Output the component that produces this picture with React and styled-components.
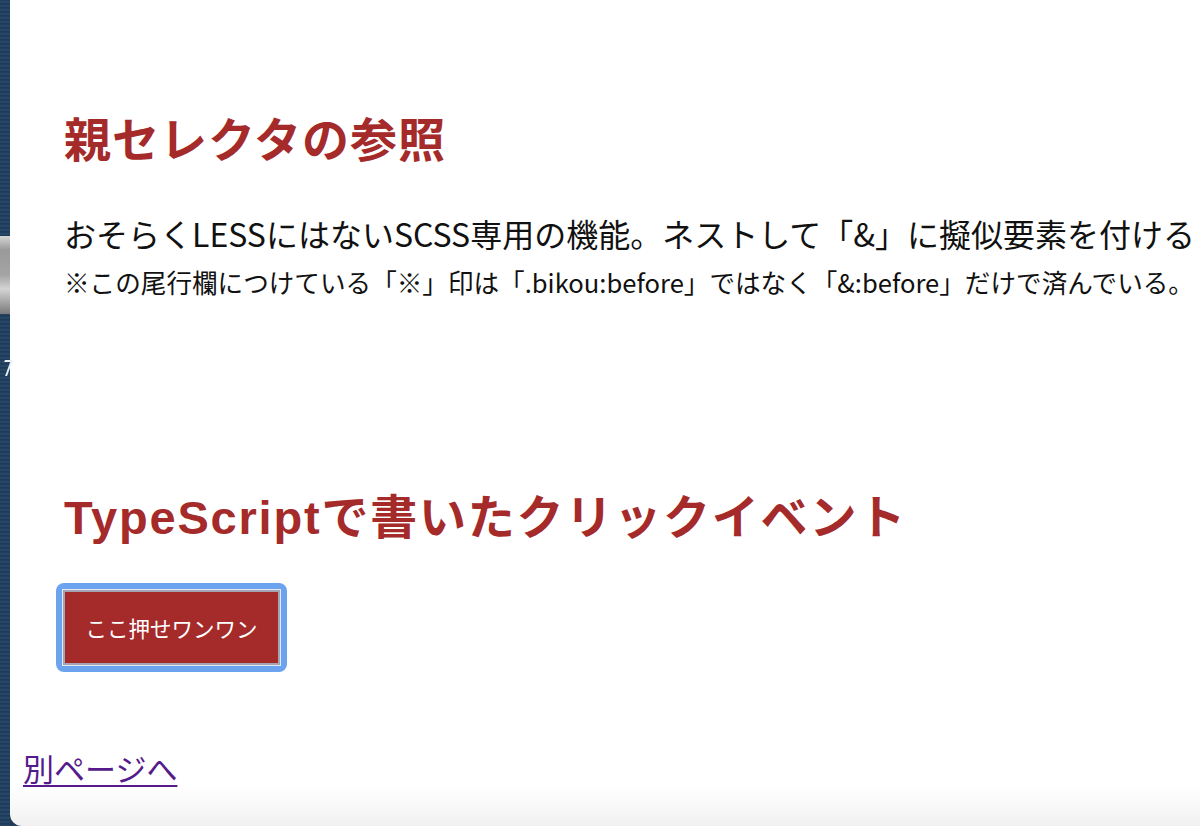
import styled, { createGlobalStyle } from "styled-components";

const GlobalStyle = createGlobalStyle`
  html, body {
    margin: 0;
    padding: 0;
    height: 826px;
    overflow: hidden;
    background: #1f3b58;
  }
  body {
    font-family: "Noto Sans CJK JP", "Noto Sans", sans-serif;
    color: #111;
  }
`;

const App = () => {
  return (
    <>
      <GlobalStyle />
      <Screen>
        <DesktopStrip>
          <Thumbnail />
          <DeskMark />
        </DesktopStrip>

        <BrowserWindow>
          <Content>
            <Section>
              <Heading>親セレクタの参照</Heading>
              <Lead>
                おそらくLESSにはないSCSS専用の機能。ネストして「&」に擬似要素を付ける
              </Lead>
              <Note>
                ※この尾行欄につけている「※」印は「.bikou:before」ではなく「&:before」だけで済んでいる。
              </Note>
            </Section>

            <Section $top={192}>
              <Heading $spacing={1.8}>TypeScriptで書いたクリックイベント</Heading>
              <FocusRing>
                <ClickButton type="button">ここ押せワンワン</ClickButton>
              </FocusRing>
            </Section>
          </Content>

          <PageLink href="#">別ページへ</PageLink>
        </BrowserWindow>
      </Screen>
    </>
  );
};

export default App;

const Screen = styled.div`
  display: flex;
  width: 1200px;
  height: 826px;
  overflow: hidden;
`;

const DesktopStrip = styled.div`
  flex: 0 0 9px;
  display: flex;
  flex-direction: column;
  background: repeating-linear-gradient(
    180deg,
    #1d3a57 0px,
    #2a4c6e 2px,
    #1a3450 4px
  );
`;

const Thumbnail = styled.div`
  margin-top: 236px;
  height: 78px;
  background: linear-gradient(
    180deg,
    #d6d6d6 0%,
    #9a9a9a 18%,
    #a4a4a4 50%,
    #d4d4d4 68%,
    #7a7a7a 100%
  );
`;

const DeskMark = styled.div`
  margin-top: 46px;
  margin-left: 2px;
  width: 6px;
  height: 14px;
  border-top: 2px solid #e8eef4;
  border-right: 2px solid #e8eef4;
  transform: skewX(-20deg);
`;

const BrowserWindow = styled.div`
  flex: 1;
  display: flex;
  flex-direction: column;
  padding-left: 13px;
  border-bottom-left-radius: 12px;
  background: linear-gradient(
    180deg,
    #ffffff 0px,
    #ffffff 785px,
    #f1f1f1 826px
  );
`;

const Content = styled.main`
  padding: 113px 0 0 41px;
`;

const Section = styled.section`
  margin-top: ${({ $top }) => ($top ? `${$top}px` : "0")};
`;

const Heading = styled.h1`
  margin: 0;
  font-family: "Liberation Sans", "Noto Sans CJK JP", sans-serif;
  font-size: 47px;
  line-height: 56px;
  font-weight: 700;
  letter-spacing: ${({ $spacing }) => $spacing ?? 1}px;
  color: #a52a2a;
  white-space: nowrap;
`;

const Lead = styled.p`
  margin: 43px 0 0;
  font-size: 32px;
  line-height: 42px;
  white-space: nowrap;
`;

const Note = styled.p`
  margin: 12px 0 0;
  font-size: 25.6px;
  line-height: 32px;
  white-space: nowrap;
`;

const FocusRing = styled.span`
  display: inline-flex;
  margin: 37px 0 0 -8px;
  padding: 7px;
  border-radius: 8px;
  background: #6ba3ee;
`;

const ClickButton = styled.button`
  width: 217px;
  height: 75px;
  padding: 0;
  border: 2px solid #a4a4b4;
  box-shadow: 0 0 0 1px #e3e9f3;
  background: #a52a2a;
  color: #fff;
  font-family: "Noto Sans CJK JP", sans-serif;
  font-size: 21.5px;
  cursor: pointer;
`;

const PageLink = styled.a`
  margin-top: 76px;
  align-self: flex-start;
  font-size: 31px;
  line-height: 40px;
  color: #551a8b;
  text-decoration: underline;
  text-underline-offset: 4px;
  text-decoration-thickness: 2px;
`;
